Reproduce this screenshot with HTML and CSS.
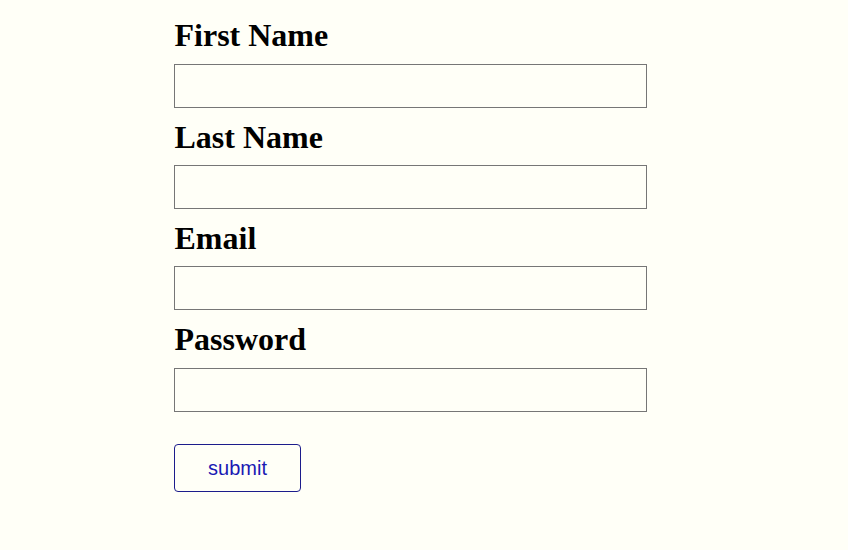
FILE: index.html
```html
<!DOCTYPE html>
<html>
<head>
<meta charset="utf-8">
<link rel="stylesheet" href="styles.css">
</head>
<body>
<form class="signup">
  <label class="field-label" for="fn">First Name</label>
  <input class="field-input" id="fn" type="text">
  <label class="field-label" for="ln">Last Name</label>
  <input class="field-input" id="ln" type="text">
  <label class="field-label" for="em">Email</label>
  <input class="field-input" id="em" type="email">
  <label class="field-label" for="pw">Password</label>
  <input class="field-input" id="pw" type="password">
  <button class="submit-btn" type="button">submit</button>
</form>
</body>
</html>
```
FILE: styles.css
```css
html, body {
  margin: 0;
  padding: 0;
  background: #fffff7;
  height: 100%;
}
.signup {
  display: flex;
  flex-direction: column;
  align-items: flex-start;
  gap: 10px;
  width: 473px;
  margin-left: 174px;
  padding-top: 16.4px;
}
.field-label {
  display: block;
  font-family: "Liberation Serif", "Times New Roman", serif;
  font-weight: bold;
  font-size: 32px;
  line-height: 35.33px;
  padding-top: 2px;
  color: #000;
  padding-left: 0.5px;
}
.field-input {
  box-sizing: border-box;
  width: 473px;
  height: 44px;
  margin: 0;
  border: 1px solid #767676;
  background: transparent;
  font-size: 16px;
  padding: 0 8px;
}
.submit-btn {
  box-sizing: border-box;
  margin-top: 22px;
  width: 127px;
  height: 48px;
  border: 1px solid #1c1c8c;
  border-radius: 4px;
  background: transparent;
  color: #1a1ab4;
  font-family: "Liberation Sans", Arial, sans-serif;
  font-size: 20px;
  padding: 2px 0 0 0;
}
```
